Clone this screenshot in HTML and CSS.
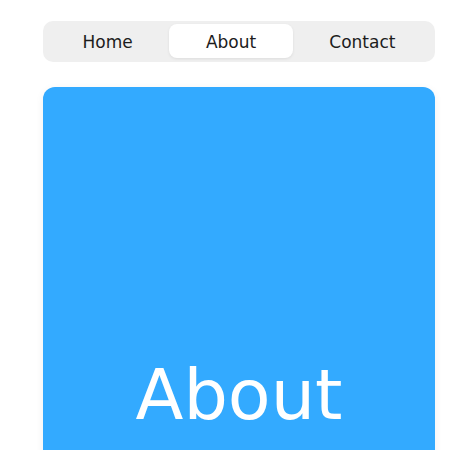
FILE: index.html
```html
<!DOCTYPE html>
<html>
<head>
<meta charset="utf-8">
<link rel="stylesheet" href="styles.css">
</head>
<body>
<div class="page">
  <nav class="tabs">
    <div class="tab">Home</div>
    <div class="tab active">About</div>
    <div class="tab">Contact</div>
  </nav>
  <section class="card">
    <div class="card-title">About</div>
  </section>
</div>
</body>
</html>
```
FILE: styles.css
```css
html, body {
  margin: 0;
  padding: 0;
  background: #ffffff;
  overflow: hidden;
}
.page {
  width: 392px;
  padding: 21px 0 0 43px;
  font-family: "DejaVu Sans", sans-serif;
}
.tabs {
  display: flex;
  padding: 3px 3px 4px;
  background: #efefef;
  border-radius: 10px;
}
.tab {
  flex: 1 1 auto;
  text-align: center;
  font-size: 17px;
  line-height: 20px;
  padding: 8px 10px 6px;
  color: #1c1c1c;
  border-radius: 8px;
}
.tab.active {
  background: #ffffff;
  box-shadow: 0 1px 3px rgba(0, 0, 0, 0.08);
}
.card {
  margin-top: 25px;
  height: 420px;
  background: #33aaff;
  border-radius: 12px;
  box-shadow: 0 2px 8px rgba(0, 0, 0, 0.06);
  padding-top: 267px;
  box-sizing: border-box;
}
.card-title {
  text-align: center;
  color: #ffffff;
  font-size: 70px;
}
```
